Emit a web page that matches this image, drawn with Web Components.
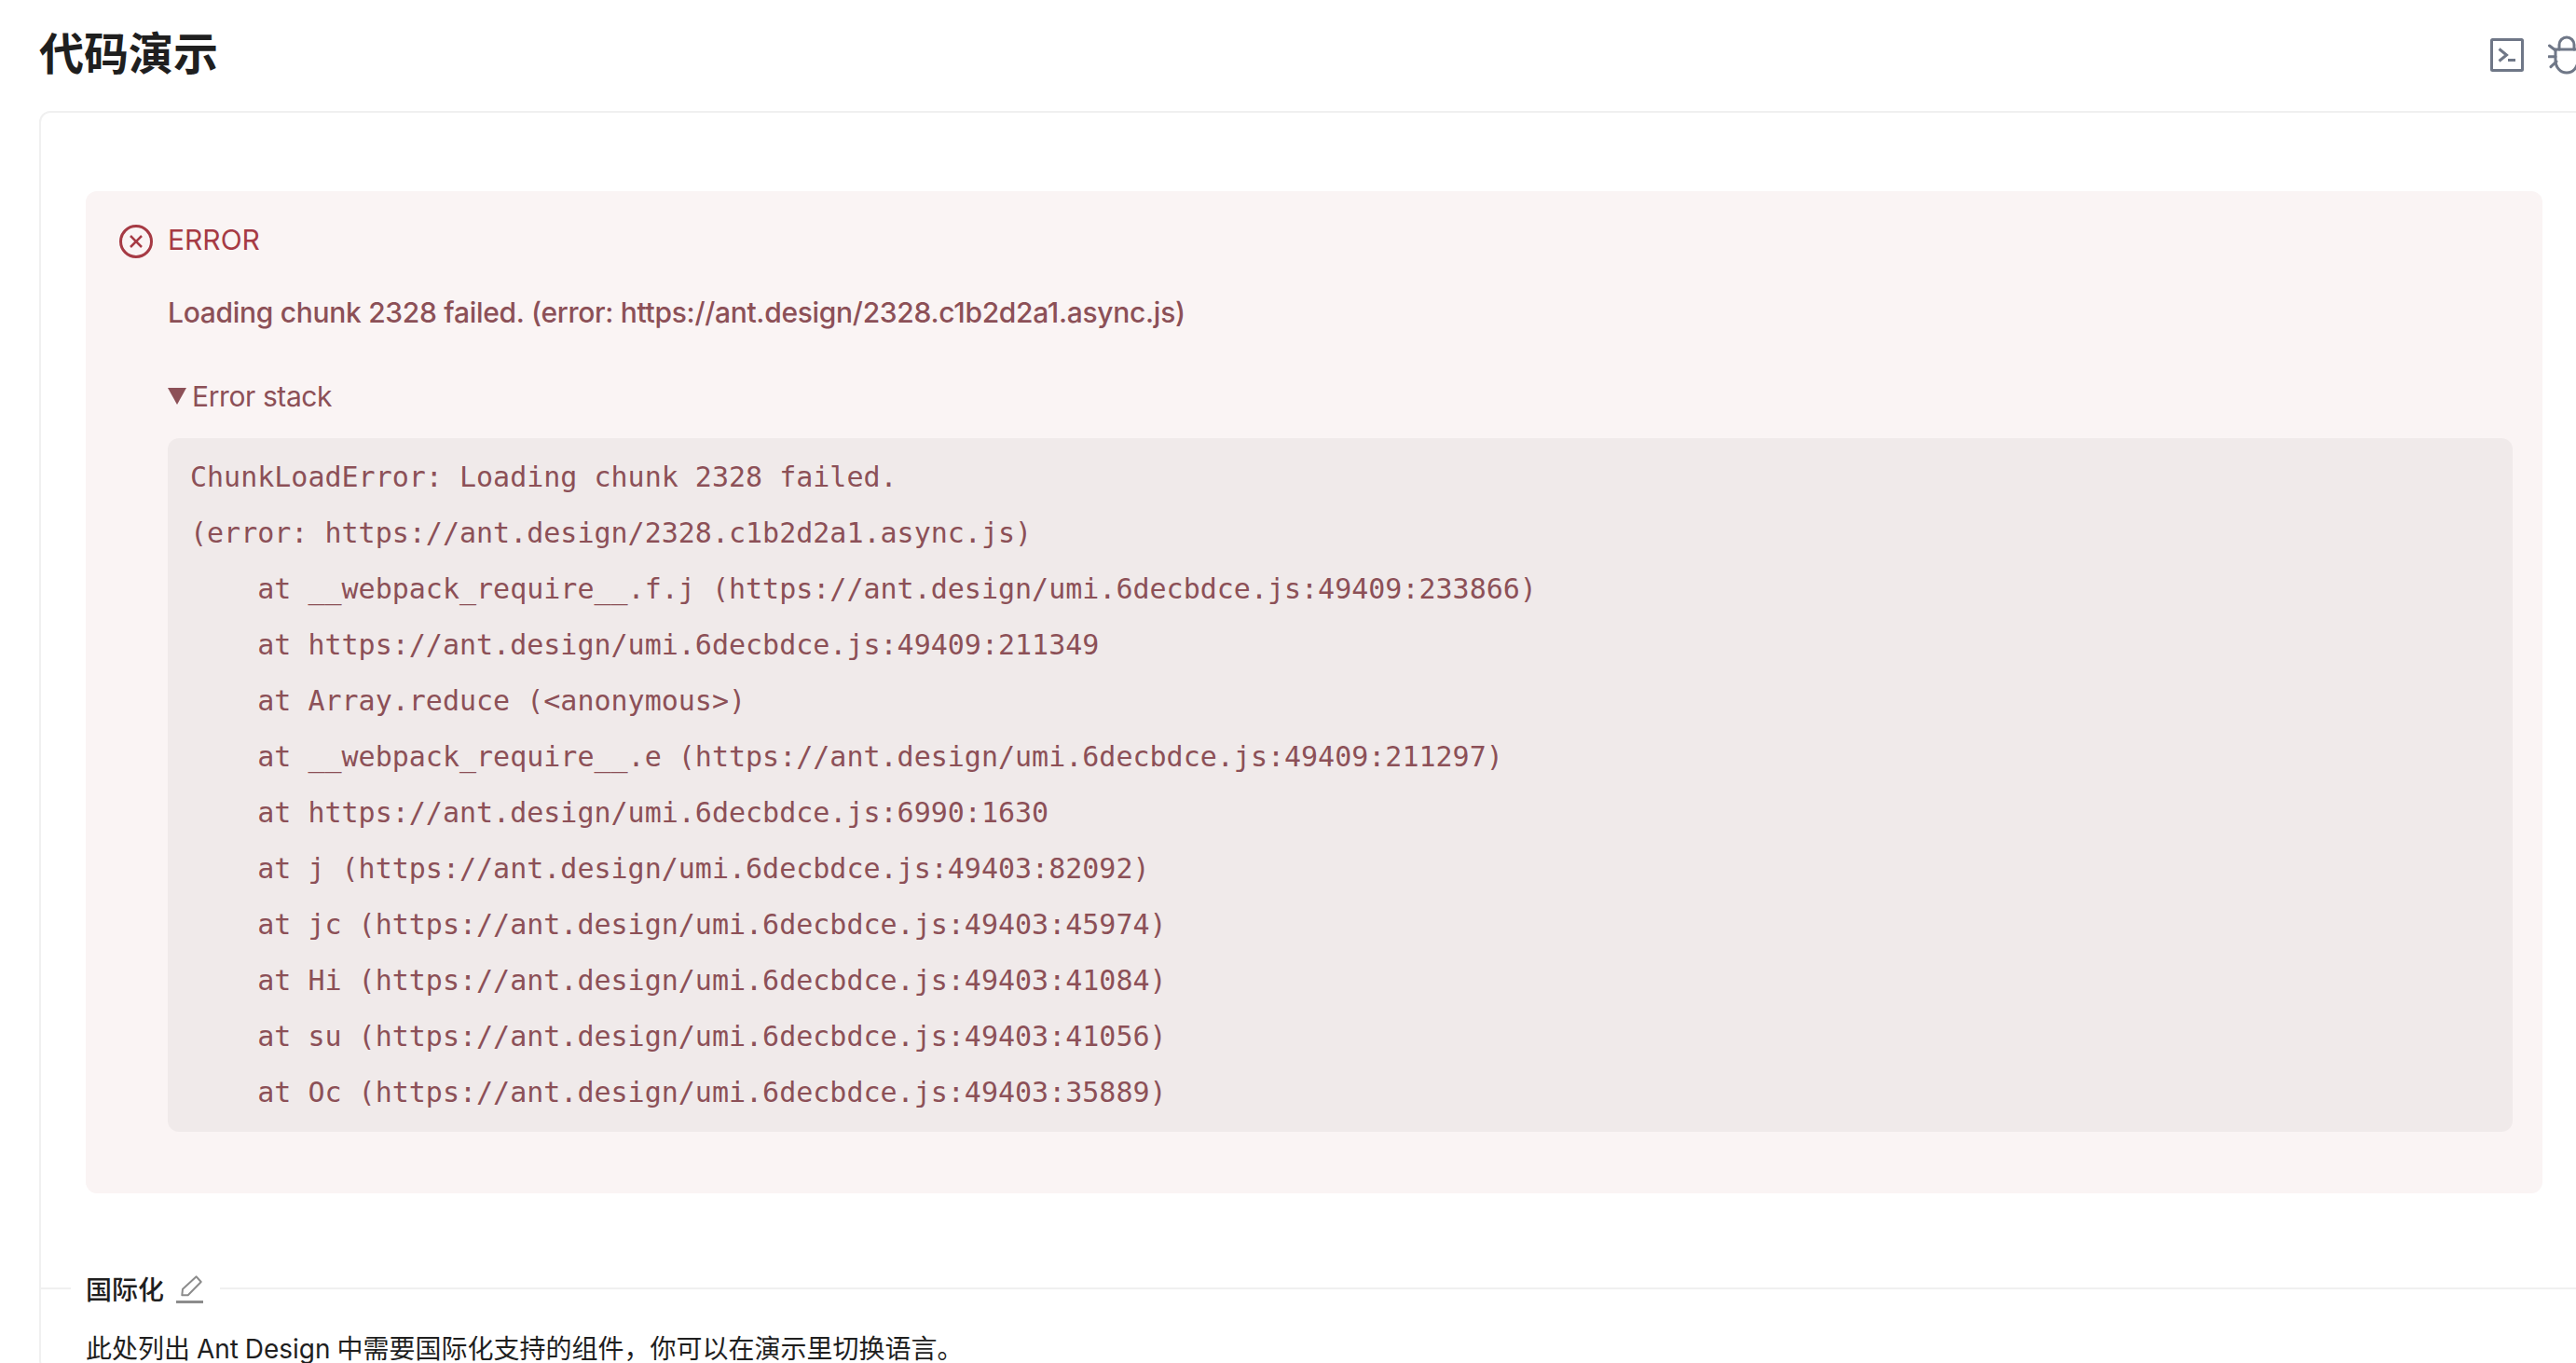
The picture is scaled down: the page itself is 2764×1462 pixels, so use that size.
<!DOCTYPE html>
<html lang="zh">
<head>
<meta charset="utf-8">
<title>代码演示</title>
<style>
  html, body { margin: 0; height: 100%; overflow: hidden; background: #fff; }
  body { font-family: Inter, "Noto Sans CJK SC", sans-serif; color: #1f1f1f; }
</style>
</head>
<body>
<demo-page>
  <page-header>代码演示</page-header>
  <demo-card>
    <error-alert
      message="Loading chunk 2328 failed. (error: https://ant.design/2328.c1b2d2a1.async.js)">ChunkLoadError: Loading chunk 2328 failed.
(error: https://ant.design/2328.c1b2d2a1.async.js)
    at __webpack_require__.f.j (https://ant.design/umi.6decbdce.js:49409:233866)
    at https://ant.design/umi.6decbdce.js:49409:211349
    at Array.reduce (&lt;anonymous&gt;)
    at __webpack_require__.e (https://ant.design/umi.6decbdce.js:49409:211297)
    at https://ant.design/umi.6decbdce.js:6990:1630
    at j (https://ant.design/umi.6decbdce.js:49403:82092)
    at jc (https://ant.design/umi.6decbdce.js:49403:45974)
    at Hi (https://ant.design/umi.6decbdce.js:49403:41084)
    at su (https://ant.design/umi.6decbdce.js:49403:41056)
    at Oc (https://ant.design/umi.6decbdce.js:49403:35889)</error-alert>
    <demo-meta title="国际化">此处列出 Ant Design 中需要国际化支持的组件&#xFF0C;你可以在演示里切换语言。</demo-meta>
  </demo-card>
</demo-page>
<script>
class DemoPage extends HTMLElement {
  constructor() {
    super();
    this.attachShadow({ mode: "open" });
    this.shadowRoot.innerHTML = `
      <style>
        :host { display: block; width: 2800px; }
      </style>
      <slot></slot>`;
  }
}

class PageHeader extends HTMLElement {
  constructor() {
    super();
    this.attachShadow({ mode: "open" });
    this.shadowRoot.innerHTML = `
      <style>
        :host {
          display: flex;
          align-items: center;
          box-sizing: border-box;
          width: 2772px;
          height: 119px;
          padding: 0 0 4px 42px;
        }
        h2 {
          flex: 1;
          margin: 0;
          font: 600 48px/64px Inter, "Noto Sans CJK SC", sans-serif;
          color: #1f1f1f;
        }
        .icons { display: flex; align-items: center; gap: 26px; margin-top: 3px; }
        svg { display: block; fill: none; stroke: #6f7787; }
      </style>
      <h2><slot></slot></h2>
      <div class="icons">
        <svg width="36" height="36" viewBox="0 0 36 36" stroke-width="3">
          <rect x="1.500" y="1.500" width="33" height="33" rx="1"/>
          <path d="M9.500 11.500l8 6.500-8 6.500M19 23.500h8"/>
        </svg>
        <svg width="38" height="42" viewBox="0 0 38 42" stroke-width="3" stroke-linecap="round">
          <path d="M12 15v-5a8 8 0 0 1 16 0v5"/>
          <path d="M8 15h24v12a12 13 0 0 1-24 0z"/>
          <path d="M1.500 11L8 16M1 22.700h7M3 33.700L9 28"/>
        </svg>
      </div>`;
  }
}

class DemoCard extends HTMLElement {
  constructor() {
    super();
    this.attachShadow({ mode: "open" });
    this.shadowRoot.innerHTML = `
      <style>
        :host {
          display: block;
          box-sizing: border-box;
          margin-left: 42px;
          width: 2758px;
          padding-top: 84px;
          border: 2px solid #f0f0f0;
          border-radius: 12px;
        }
      </style>
      <slot></slot>`;
  }
}

class ErrorAlert extends HTMLElement {
  constructor() {
    super();
    this.attachShadow({ mode: "open" });
    this.shadowRoot.innerHTML = `
      <style>
        :host {
          display: block;
          box-sizing: border-box;
          width: 2636px;
          margin-left: 48px;
          padding: 24px 32px 66px 36px;
          background: #faf4f4;
          border-radius: 12px;
          color: #8c5057;
        }
        .head { display: flex; align-items: center; gap: 16px; height: 56px; color: #a63a44; font-size: 30px; }
        svg { display: block; flex: none; margin-top: 4px; }
        .body { margin-left: 52px; }
        .msg { margin-top: 26px; font-size: 30px; line-height: 48px; font-weight: 500; letter-spacing: -0.3px; }
        .toggle { display: flex; align-items: center; gap: 6px; margin-top: 42px; height: 48px; font-size: 30px; letter-spacing: -0.4px; }
        .tri { width: 0; height: 0; border-left: 10px solid transparent; border-right: 10px solid transparent; border-top: 18px solid #8c5057; }
        pre {
          margin: 21px 0 0;
          padding: 12px 24px;
          background: #f0eaea;
          border-radius: 12px;
          font: 30px/60px "DejaVu Sans Mono", monospace;
        }
      </style>
      <div class="head">
        <svg width="36" height="36" viewBox="0 0 36 36" fill="none" stroke="#a63a44" stroke-width="3">
          <circle cx="18" cy="18" r="16.500"/>
          <path d="M12 12l12 12M24 12L12 24" stroke-width="2.500"/>
        </svg>
        <span>ERROR</span>
      </div>
      <div class="body">
        <div class="msg"></div>
        <div class="toggle"><span class="tri"></span><span>Error stack</span></div>
        <pre><slot></slot></pre>
      </div>`;
    this.shadowRoot.querySelector(".msg").innerText = this.getAttribute("message");
  }
}

class DemoMeta extends HTMLElement {
  constructor() {
    super();
    this.attachShadow({ mode: "open" });
    this.shadowRoot.innerHTML = `
      <style>
        :host { display: block; margin-top: 80px; font-family: Inter, "Noto Sans CJK SC", sans-serif; color: #1f1f1f; }
        .title { display: flex; align-items: center; height: 48px; }
        .title::before { content: ""; width: 32px; height: 2px; margin-bottom: 5px; background: #f0f0f0; }
        .title::after { content: ""; flex: 1; height: 2px; margin-bottom: 5px; background: #f0f0f0; }
        .label { display: flex; align-items: center; gap: 13px; padding: 0 18px 0 16px; font-size: 28px; font-weight: 500; line-height: 48px; }
        svg { display: block; margin-top: -3px; }
        p { margin: 17px 0 0 48px; font-size: 28px; line-height: 44px; word-spacing: -1px; }
      </style>
      <div class="title">
        <div class="label"><span></span>
          <svg width="29" height="30" viewBox="0 0 29 30" fill="none" stroke="#8c8c8c" stroke-width="2" stroke-linejoin="round">
            <path d="M6.300 21.300L7 14.700 21.700 1.300 26.700 7 12.700 21.300z"/>
            <path d="M0 28.500h29" stroke-width="3"/>
          </svg>
        </div>
      </div>
      <p><slot></slot></p>`;
    this.shadowRoot.querySelector(".label span").innerText = this.getAttribute("title");
  }
}

customElements.define("demo-page", DemoPage);
customElements.define("page-header", PageHeader);
customElements.define("demo-card", DemoCard);
customElements.define("error-alert", ErrorAlert);
customElements.define("demo-meta", DemoMeta);
</script>
</body>
</html>
